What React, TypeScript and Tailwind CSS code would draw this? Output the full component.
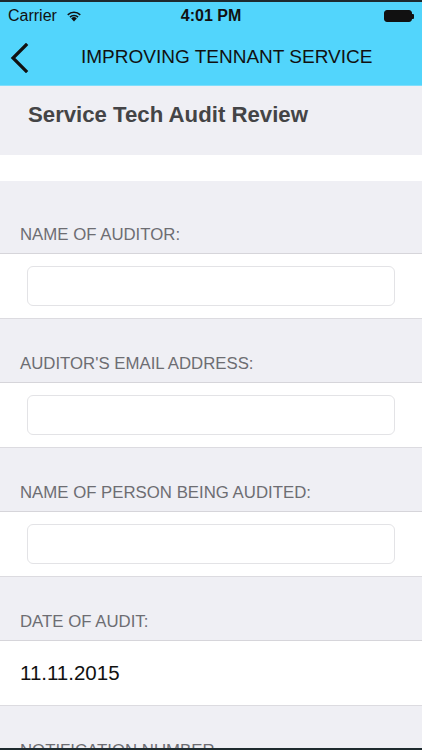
import React from "react";

function Wifi() {
  return (
    <svg width="16" height="12" viewBox="0 0 16 12" className="block">
      <path d="M8 11.5 L5.2 8.4 A4 4 0 0 1 10.8 8.4 Z" fill="#111" />
      <path d="M3.4 6.5 A6.6 6.6 0 0 1 12.6 6.5 L11.5 7.7 A5 5 0 0 0 4.5 7.7 Z" fill="#111" />
      <path d="M1.2 4.2 A9.8 9.8 0 0 1 14.8 4.2 L13.7 5.4 A8.2 8.2 0 0 0 2.3 5.4 Z" fill="#111" />
    </svg>
  );
}

function Battery() {
  return (
    <div className="flex items-center">
      <div className="w-[28px] h-[12px] rounded-[3px] bg-[#111] border border-[#111]" />
      <div className="w-[2px] h-[5px] bg-[#111] rounded-r-[1px]" />
    </div>
  );
}

function SectionLabel({ text, tall }: { text: string; tall?: boolean }) {
  return (
    <div
      className={`${tall ? "h-[73px]" : "h-[64px]"} flex items-end pb-[8px] pl-[20px] border-b border-[#d6d5da] text-[16.8px] leading-[20px] text-[#6d6d72]`}
    >
      {text}
    </div>
  );
}

function InputRow() {
  return (
    <div className="h-[65px] bg-white flex items-center px-[27px] border-b border-[#dcdbe0]">
      <div className="w-full h-[40px] rounded-[6px] border border-[#e3e3e6] bg-white" />
    </div>
  );
}

export default function App() {
  return (
    <div
      className="w-[422px] h-[750px] flex flex-col overflow-hidden bg-[#efeff4]"
      style={{ fontFamily: '"Liberation Sans", Arial, sans-serif' }}
    >
      <div className="h-[2px] bg-[#1e2a2e]" />

      {/* status + nav */}
      <div className="bg-[#52d5fc]">
        <div className="h-[28px] flex items-center justify-between px-[8px] text-[16px] text-[#111]">
          <div className="flex items-center gap-[9px] w-[120px]">
            <span>Carrier</span>
            <Wifi />
          </div>
          <span className="font-bold">4:01 PM</span>
          <div className="w-[120px] flex justify-end">
            <Battery />
          </div>
        </div>
        <div className="h-[56px] flex items-center border-b border-[#7fdefb]">
          <div className="w-[81px] pl-[10px]">
            <svg width="20" height="30" viewBox="0 0 20 30" className="block">
              <path d="M16 2 L3 15 L16 28" fill="none" stroke="#111" strokeWidth="3.2" strokeLinecap="square" />
            </svg>
          </div>
          <div className="text-[19px] text-[#111] whitespace-nowrap">
            IMPROVING TENNANT SERVICE
          </div>
        </div>
      </div>

      <div className="flex-1 overflow-hidden">
        <div className="h-[69px] pt-[16px] pl-[28px] text-[22.2px] leading-[26px] font-bold text-[#444446]">
          Service Tech Audit Review
        </div>
        <div className="h-[26px] bg-white" />

        <SectionLabel text="NAME OF AUDITOR:" tall />
        <InputRow />
        <SectionLabel text="AUDITOR'S EMAIL ADDRESS:" />
        <InputRow />
        <SectionLabel text="NAME OF PERSON BEING AUDITED:" />
        <InputRow />
        <SectionLabel text="DATE OF AUDIT:" />
        <div className="h-[65px] bg-white flex items-center pl-[20px] border-b border-[#dcdbe0] text-[20.5px] text-[#111]">
          11.11.2015
        </div>
        <SectionLabel text="NOTIFICATION NUMBER" />
      </div>

      <div className="h-[2px] bg-[#1e2a2e]" />
    </div>
  );
}
